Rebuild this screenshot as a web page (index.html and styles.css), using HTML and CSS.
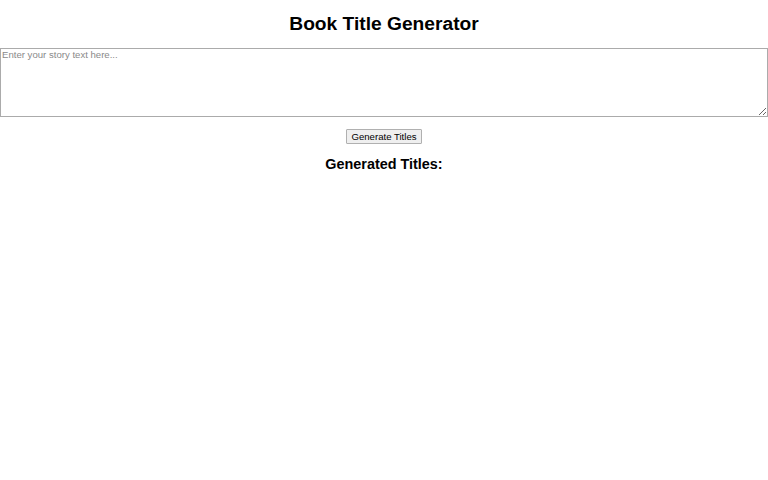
FILE: index.html
```html
<!DOCTYPE html>
<html lang="en">
<head>
<meta charset="utf-8">
<title>Book Title Generator</title>
<link rel="stylesheet" href="styles.css">
</head>
<body>
  <main class="app">
    <h1 class="title">Book Title Generator</h1>
    <textarea class="story" placeholder="Enter your story text here..."></textarea>
    <div class="actions">
      <button class="generate" type="button">Generate Titles</button>
    </div>
    <h2 class="results-title">Generated Titles:</h2>
    <ul class="results"></ul>
  </main>
</body>
</html>
```

FILE: styles.css
```css
html, body {
  margin: 0;
  padding: 0;
  background: #ffffff;
}

body {
  font-family: "Liberation Sans", Arial, sans-serif;
  color: #000000;
}

.app {
  display: flex;
  flex-direction: column;
  align-items: stretch;
  text-align: center;
}

.title {
  font-size: 19.2px;
  line-height: 22px;
  font-weight: bold;
  margin: 13px 0 13px;
}

.story {
  display: block;
  box-sizing: border-box;
  width: 100%;
  height: 69px;
  margin: 0;
  padding: 0 1px;
  border: 1px solid #ababab;
  font-family: "Liberation Sans", Arial, sans-serif;
  font-size: 9.6px;
  line-height: 11px;
  color: #000;
  background: #fff;
  outline: none;
}

.story::placeholder {
  color: #8a8a8a;
}

.actions {
  display: flex;
  justify-content: center;
  margin-top: 12px;
}

.generate {
  box-sizing: border-box;
  height: 15px;
  padding: 0 4px;
  border: 1px solid #b0b0b0;
  border-radius: 1px;
  background: #efefef;
  font-family: "Liberation Sans", Arial, sans-serif;
  font-size: 9.6px;
  line-height: 13px;
  color: #000;
}

.results-title {
  font-size: 14.4px;
  line-height: 17px;
  font-weight: bold;
  margin: 12px 0 12px;
}

.results {
  margin: 0;
  padding: 0;
  list-style: none;
}
```
